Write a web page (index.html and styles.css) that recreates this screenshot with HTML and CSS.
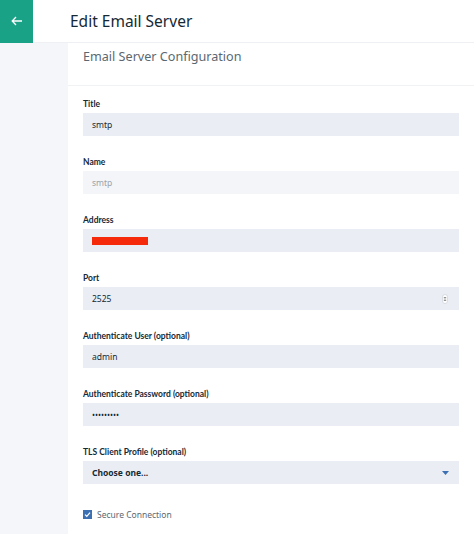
FILE: index.html
```html
<!DOCTYPE html>
<html lang="en">
  <head>
    <meta charset="UTF-8" />
    <meta name="viewport" content="width=device-width, initial-scale=1.0" />
    <title>Edit Email Server</title>
    <link rel="stylesheet" href="styles.css">
  </head>
  <body>
    <!-- Barra superior -->
    <header class="topbar">
      <button class="back-btn" aria-label="Back">
        <svg width="12" height="10" viewBox="0 0 12 10">
          <path d="M11 5H1.5M5 1L1.2 5L5 9" fill="none" stroke="#fff" stroke-width="1.3" />
        </svg>
      </button>
      <h1 class="page-title">Edit Email Server</h1>
    </header>

    <div class="layout">
      <aside class="sidebar"></aside>

      <main class="content">
        <div class="section-head">Email Server Configuration</div>

        <form class="form">
          <div class="field">
            <label>Title</label>
            <input class="input" type="text" value="smtp" />
          </div>

          <div class="field">
            <label>Name</label>
            <input class="input" type="text" value="smtp" disabled />
          </div>

          <div class="field">
            <label>Address</label>
            <div class="input"><span class="redacted"></span></div>
          </div>

          <div class="field">
            <label>Port</label>
            <div class="input number">
              <span>2525</span>
              <span class="spinner">
                <svg width="6" height="10" viewBox="0 0 6 10">
                  <rect x="0.5" y="0.5" width="5" height="9" rx="2.5" fill="#fff" stroke="#c7ccd4" stroke-width="0.6" />
                  <path d="M1.8 3.8h2.4M1.8 6.2h2.4" stroke="#555" stroke-width="0.9" />
                </svg>
              </span>
            </div>
          </div>

          <div class="field">
            <label>Authenticate User (optional)</label>
            <input class="input" type="text" value="admin" />
          </div>

          <div class="field">
            <label>Authenticate Password (optional)</label>
            <input class="input password" type="password" value="password1" />
          </div>

          <div class="field">
            <label>TLS Client Profile (optional)</label>
            <div class="input select">
              <span>Choose one...</span>
              <svg width="7" height="4" viewBox="0 0 7 4">
                <path d="M0 0h7L3.5 4z" fill="#3d70b2" />
              </svg>
            </div>
          </div>

          <div class="check-row">
            <span class="checkbox">
              <svg width="9" height="9" viewBox="0 0 9 9">
                <path d="M2 4.6L3.8 6.3L7 2.6" fill="none" stroke="#fff" stroke-width="1.2" />
              </svg>
            </span>
            <span class="check-label">Secure Connection</span>
          </div>
        </form>
      </main>
    </div>
  </body>
</html>
```

FILE: styles.css
```css
* {
  box-sizing: border-box;
}

body {
  margin: 0;
  font-family: "Noto Sans", "Open Sans", Arial, sans-serif;
  color: #152935;
  background: #fff;
}

.topbar {
  display: flex;
  align-items: center;
  height: 43px;
  border-bottom: 1px solid #eef0f3;
}

.back-btn {
  width: 33px;
  height: 43px;
  border: none;
  padding: 0;
  background-color: #1aa287;
  display: flex;
  align-items: center;
  justify-content: center;
}

.page-title {
  margin: 0 0 0 37px;
  font-size: 15.5px;
  font-weight: 400;
  color: #152935;
}

.layout {
  display: flex;
  min-height: 491px;
}

.sidebar {
  width: 68px;
  background-color: #f5f6fa;
}

.content {
  flex: 1;
}

.section-head {
  height: 43px;
  padding: 5px 0 0 15px;
  font-size: 12.6px;
  color: #5a6872;
  border-bottom: 1px solid #f0f2f4;
}

.form {
  padding: 12px 15px 0 15px;
}

.field {
  margin-bottom: 20px;
}

.field label {
  display: block;
  height: 12px;
  line-height: 12px;
  margin-bottom: 3px;
  font-family: Lato, "Noto Sans", sans-serif;
  font-size: 8.5px;
  font-weight: 700;
  color: #152935;
}

.input {
  display: flex;
  align-items: center;
  width: 100%;
  height: 23px;
  padding: 0 9px;
  border: none;
  outline: none;
  background-color: #eaeef4;
  font-family: inherit;
  font-size: 8.5px;
  color: #152935;
}

.input:disabled {
  background-color: #f3f5f8;
  color: #9aa3ab;
}

.password {
  font-size: 8px;
}

.redacted {
  display: block;
  width: 56px;
  height: 8px;
  background-color: #f42a0a;
}

.number,
.select {
  justify-content: space-between;
}

.number {
  padding-right: 11px;
}

.spinner {
  display: flex;
}

.select {
  font-weight: 700;
  padding-right: 10px;
}

.check-row {
  display: flex;
  align-items: center;
  margin-top: 25px;
  gap: 5px;
}

.checkbox {
  width: 9px;
  height: 9px;
  background-color: #3d70b2;
  display: flex;
}

.check-label {
  font-size: 8.5px;
  color: #5a6872;
}
```
